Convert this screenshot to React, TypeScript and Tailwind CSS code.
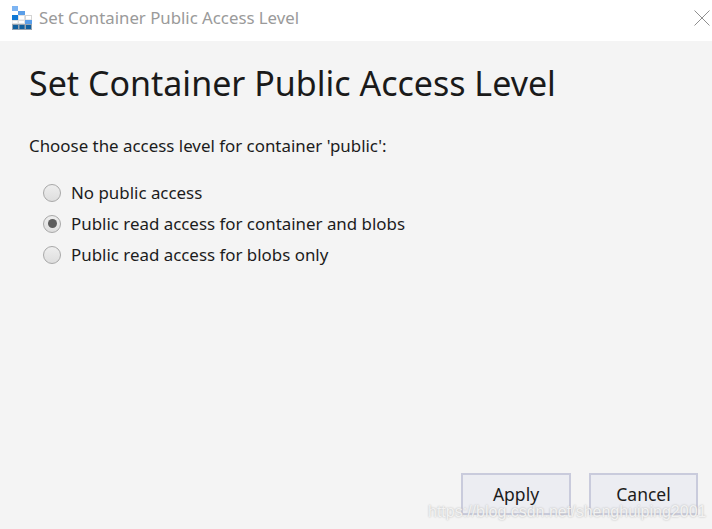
function AppIcon() {
  return (
    <svg width="20" height="24" viewBox="0 0 20 24" className="shrink-0">
      <rect x="0" y="0" width="6" height="5" fill="#7db4f2" />
      <rect x="6" y="5" width="7" height="4.5" fill="#5a9ee8" />
      <rect x="0" y="9" width="6.5" height="5" fill="#0f78d4" />
      <rect x="13.5" y="9.5" width="6" height="4.5" fill="#ffffff" stroke="#d4d4d4" />
      <rect x="6.5" y="9.5" width="6" height="4.5" fill="#ffffff" stroke="#e0e0e0" />
      <rect x="6.5" y="14.5" width="6" height="3" fill="#ffffff" stroke="#e0e0e0" />
      <rect x="0" y="14.5" width="6" height="3" fill="#ffffff" stroke="#e0e0e0" />
      <rect x="13" y="14" width="7" height="4" fill="#5a9ee8" />
      <rect x="0" y="18" width="20" height="6" fill="#97a4b1" />
      <rect x="1" y="19" width="5" height="4" fill="#11609f" />
      <rect x="7.5" y="19" width="5" height="4" fill="#11609f" />
      <rect x="14" y="19" width="5" height="4" fill="#11609f" />
    </svg>
  );
}

function CloseIcon() {
  return (
    <svg width="16" height="16" viewBox="0 0 16 16" className="shrink-0">
      <path d="M0.5 0.5 L15.5 15.5 M15.5 0.5 L0.5 15.5" stroke="#8f8f8f" strokeWidth="1" fill="none" />
    </svg>
  );
}

function Radio({ label, checked }: { label: string; checked?: boolean }) {
  return (
    <label className="flex h-[31px] items-center gap-[10px]">
      <span className="flex h-[18px] w-[18px] items-center justify-center rounded-full border border-[#a8a8a8] bg-gradient-to-b from-[#eeeeee] to-[#dedede]">
        {checked && <span className="h-[9px] w-[9px] rounded-full bg-[#5c5c5c]" />}
      </span>
      <span>{label}</span>
    </label>
  );
}

export default function App() {
  return (
    <div className="relative flex h-[529px] w-[712px] flex-col overflow-hidden bg-[#f4f4f4] font-['Noto_Sans','Open_Sans',sans-serif] text-[#1c1c1c]">
      {/* Title bar */}
      <div className="flex h-[41px] items-start justify-between bg-white pt-[6px] pl-3 pr-[2px]">
        <div className="flex items-center gap-[7px]">
          <AppIcon />
          <span className="-mt-[1px] text-[16.8px] text-[#9a9a9a]">Set Container Public Access Level</span>
        </div>
        <div className="mt-[4px]">
          <CloseIcon />
        </div>
      </div>

      <div className="flex flex-1 flex-col px-[29px]">
        <h1 className="mt-[17px] text-[34px] leading-[50px] font-normal text-[#1a1a1a]">
          Set Container Public Access Level
        </h1>
        <p className="mt-[26px] text-[16.9px] leading-[24px]">Choose the access level for container 'public':</p>
        <div className="mt-[19px] ml-[14px] flex flex-col text-[16.9px]">
          <Radio label="No public access" />
          <Radio label="Public read access for container and blobs" checked />
          <Radio label="Public read access for blobs only" />
        </div>
      </div>

      {/* Footer buttons */}
      <div className="flex justify-end gap-[18px] pr-[14px] pb-[14px]">
        <button className="h-[42px] w-[110px] border-2 border-[#c9cbdc] bg-[#ecedf2] pt-[1px] text-[17.5px] text-[#1c1c1c]">Apply</button>
        <button className="h-[42px] w-[109px] border-2 border-[#c9cbdc] bg-[#ecedf2] pt-[1px] text-[17.5px] text-[#1c1c1c]">Cancel</button>
      </div>

      {/* Watermark */}
      <span className="absolute top-[500px] left-[428px] font-['Liberation_Sans',sans-serif] text-[16px] whitespace-nowrap text-[#f2f2f2] [text-shadow:0_0_2px_#b0b0b0]">
        https://blog.csdn.net/shenghuiping2001
      </span>
    </div>
  );
}
